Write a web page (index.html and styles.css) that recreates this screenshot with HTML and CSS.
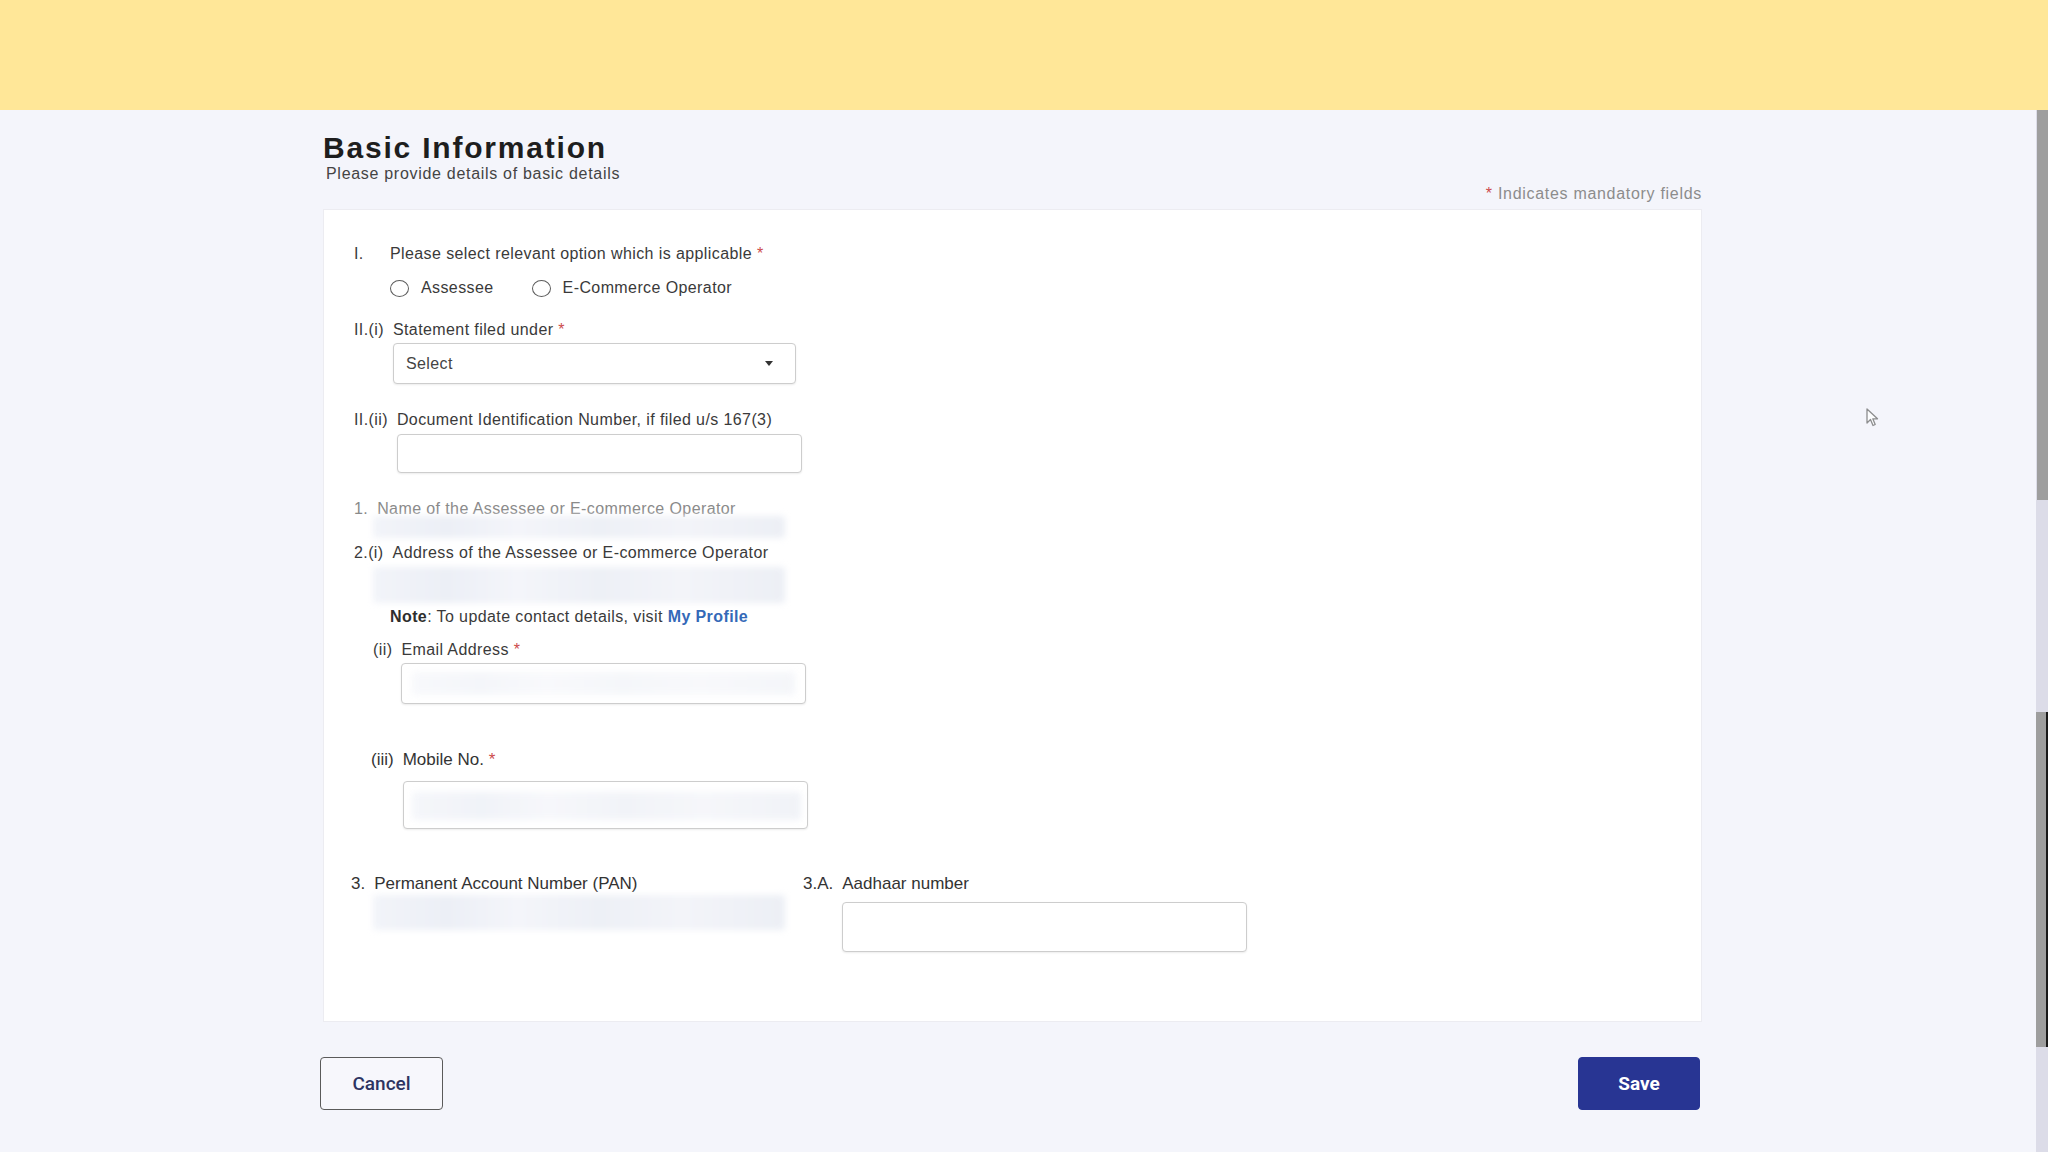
FILE: index.html
```html
<!DOCTYPE html>
<html lang="en">
<head>
<meta charset="utf-8">
<title>Basic Information</title>
<link rel="stylesheet" href="styles.css">
</head>
<body>
<header class="topbar"></header>

<main class="main">
  <div class="head">
    <h1 class="title">Basic Information</h1>
    <p class="subtitle">Please provide details of basic details</p>
    <p class="mandatory"><span class="req">*</span> Indicates mandatory fields</p>
  </div>

  <section class="card">
    <div class="row q-first">
      <span class="num num-i">I.</span>
      <span class="label">Please select relevant option which is applicable <span class="req">*</span></span>
    </div>
    <div class="radios">
      <label class="radio"><span class="circle"></span><span>Assessee</span></label>
      <label class="radio"><span class="circle"></span><span>E-Commerce Operator</span></label>
    </div>

    <div class="row q-stmt">
      <span class="num">II.(i)</span>
      <div class="body">
        <span class="label">Statement filed under <span class="req">*</span></span>
        <div class="select"><span>Select</span><span class="caret"></span></div>
      </div>
    </div>

    <div class="row q-din">
      <span class="num">II.(ii)</span>
      <div class="body">
        <span class="label">Document Identification Number, if filed u/s 167(3)</span>
        <div class="input input-din"></div>
      </div>
    </div>

    <div class="row q-name muted">
      <span class="num">1.</span>
      <span class="label">Name of the Assessee or E-commerce Operator</span>
    </div>
    <div class="redact redact-name"></div>

    <div class="row q-addr">
      <span class="num">2.(i)</span>
      <span class="label">Address of the Assessee or E-commerce Operator</span>
    </div>
    <div class="redact redact-addr"></div>

    <p class="note"><b>Note</b>: To update contact details, visit <a class="link" href="#">My Profile</a></p>

    <div class="row q-email">
      <span class="num">(ii)</span>
      <div class="body">
        <span class="label">Email Address <span class="req">*</span></span>
        <div class="input input-email"><span class="redact redact-in"></span></div>
      </div>
    </div>

    <div class="row q-mobile lower">
      <span class="num">(iii)</span>
      <div class="body">
        <span class="label">Mobile No. <span class="req">*</span></span>
        <div class="input input-mobile"><span class="redact redact-in redact-mob"></span></div>
      </div>
    </div>

    <div class="pan-grid lower">
      <div class="pan-col">
        <div class="row">
          <span class="num">3.</span>
          <span class="label">Permanent Account Number (PAN)</span>
        </div>
        <div class="redact redact-pan"></div>
      </div>
      <div class="aadhaar-col">
        <div class="row">
          <span class="num">3.A.</span>
          <div class="body">
            <span class="label">Aadhaar number</span>
            <div class="input input-aadhaar"></div>
          </div>
        </div>
      </div>
    </div>
  </section>

  <div class="actions">
    <button class="btn btn-cancel" type="button">Cancel</button>
    <button class="btn btn-save" type="button">Save</button>
  </div>
</main>

<div class="scrollbar">
  <div class="thumb thumb-a"></div>
  <div class="track-gap"></div>
  <div class="thumb thumb-b"></div>
</div>

<svg class="cursor" width="14" height="20" viewBox="0 0 14 20" aria-hidden="true">
  <path d="M1 1 L1 15 L4.5 11.5 L7 17.5 L9.2 16.5 L6.8 10.8 L11.5 10.8 Z" fill="#ffffff" stroke="#6b6b6b" stroke-width="1.3" stroke-linejoin="round"/>
</svg>
</body>
</html>
```

FILE: styles.css
```css
* { box-sizing: border-box; }

html, body {
  margin: 0;
  padding: 0;
  height: 1152px;
  overflow: hidden;
}

body {
  background: #f4f5fb;
  font-family: "Liberation Sans", Arial, sans-serif;
  color: #3a3a3a;
  font-size: 16px;
}

.topbar {
  height: 110px;
  background: #ffe798;
}

.main {
  width: 1702px;
  padding-left: 323px;
}

/* ---------- heading ---------- */
.head { padding-top: 22px; }

.title {
  margin: 0;
  font-size: 30px;
  line-height: 32px;
  font-weight: bold;
  letter-spacing: 1.8px;
  color: #1e1e1e;
}

.subtitle {
  margin: 1px 0 0 3px;
  font-size: 16px;
  line-height: 18px;
  letter-spacing: 0.7px;
  color: #444;
}

.mandatory {
  margin: 2px 0 0 0;
  text-align: right;
  font-size: 16px;
  line-height: 18px;
  letter-spacing: 0.7px;
  color: #8c8c8c;
}

.req { color: #cc4b4b; }

/* ---------- card ---------- */
.card {
  margin-top: 6px;
  background: #ffffff;
  border: 1px solid #ececf1;
  padding: 31px 30px 69px 30px;
}

.row {
  display: flex;
  align-items: flex-start;
  line-height: 20px;
  letter-spacing: 0.4px;
  padding-top: 3px;
}

.num {
  flex: none;
  margin-right: 9px;
}

.num-i { width: 27px; }

.body {
  display: flex;
  flex-direction: column;
}

.muted { color: #8a8a8a; }

/* radios */
.radios {
  display: flex;
  align-items: center;
  margin: 14px 0 0 36px;
  height: 20px;
  letter-spacing: 0.4px;
  line-height: 20px;
}

.radio {
  display: flex;
  align-items: center;
  margin-right: 38px;
}

.circle {
  width: 19px;
  height: 17px;
  border: 1.5px solid #5c5c5c;
  border-radius: 50%;
  margin-right: 12px;
  background: #fff;
}

/* form controls */
.select,
.input {
  background: #fff;
  border: 1px solid #cdcdcd;
  border-radius: 4px;
  box-shadow: 0 1px 2px rgba(0, 0, 0, 0.08);
}

.select {
  margin-top: 3px;
  width: 403px;
  height: 41px;
  display: flex;
  align-items: center;
  justify-content: space-between;
  padding: 0 22px 0 12px;
  color: #444;
}

.caret {
  width: 0;
  height: 0;
  border-left: 4px solid transparent;
  border-right: 4px solid transparent;
  border-top: 5px solid #333;
}

.input { width: 405px; }

.q-stmt { margin-top: 19px; }
.q-din { margin-top: 23px; }
.input-din { margin-top: 4px; height: 39px; }

.q-name { margin-top: 23px; }
.q-addr { margin-top: 2px; }

/* redacted (blurred) values */
.redact {
  display: block;
  background: linear-gradient(90deg, #f2f4f9 0%, #eceff6 18%, #f4f5fa 35%, #edf0f6 55%, #f3f4f9 75%, #eceff5 100%);
  filter: blur(3px);
  border-radius: 3px;
}

.redact-name {
  margin: -3px 0 0 19px;
  width: 412px;
  height: 22px;
}

.redact-addr {
  margin: 4px 0 0 19px;
  width: 412px;
  height: 36px;
}

.note {
  margin: 4px 0 0 36px;
  line-height: 20px;
  letter-spacing: 0.4px;
  color: #3a3a3a;
}

.note b { color: #2e2e2e; }

.link {
  color: #3469b8;
  font-weight: bold;
  text-decoration: none;
}

.q-email { margin: 10px 0 0 19px; }
.input-email {
  margin-top: 3px;
  height: 41px;
  padding: 8px 10px;
}

.redact-in {
  width: 100%;
  height: 100%;
  opacity: 0.55;
}

/* lower section */
.lower {
  font-size: 17px;
  letter-spacing: 0;
}

.lower .row,
.row.lower {
  line-height: 22px;
  letter-spacing: 0;
  padding-top: 1px;
}

.q-mobile { margin: 44px 0 0 17px; color: #333; }
.input-mobile {
  margin-top: 10px;
  height: 48px;
  padding: 10px 6px 8px 8px;
}
.redact-mob { opacity: 0.75; }

.pan-grid {
  margin: 43px 0 0 -3px;
  display: grid;
  grid-template-columns: 452px 1fr;
  color: #333;
}

.redact-pan {
  margin: 0 0 0 22px;
  width: 412px;
  height: 35px;
}

.input-aadhaar {
  margin-top: 7px;
  height: 50px;
}

/* ---------- buttons ---------- */
.actions {
  margin: 35px 2px 0 -3px;
  display: flex;
  justify-content: space-between;
}

.btn {
  height: 53px;
  width: 123px;
  border-radius: 4px;
  font-family: Roboto, "Liberation Sans", sans-serif;
  font-size: 19px;
  cursor: pointer;
}

.btn-cancel {
  background: #f7f7fc;
  border: 1px solid #5a5a5a;
  color: #2d3462;
  font-weight: 500;
}

.btn-save {
  background: #283593;
  border: 1px solid #283593;
  color: #ffffff;
  font-weight: 700;
  width: 122px;
}

/* ---------- overlay scrollbar & cursor ---------- */
.scrollbar {
  position: fixed;
  top: 110px;
  right: 0;
  width: 12px;
  height: 1042px;
  background: #dcdce8;
  display: flex;
  flex-direction: column;
  align-items: flex-end;
}

.thumb { background: #9e9e9e; }
.thumb-a { width: 11px; height: 390px; }
.track-gap { height: 212px; }
.thumb-b { width: 12px; height: 335px; border-right: 2px solid #1a1a1a; }

.cursor {
  position: fixed;
  left: 1866px;
  top: 408px;
  opacity: 0.75;
}
```
